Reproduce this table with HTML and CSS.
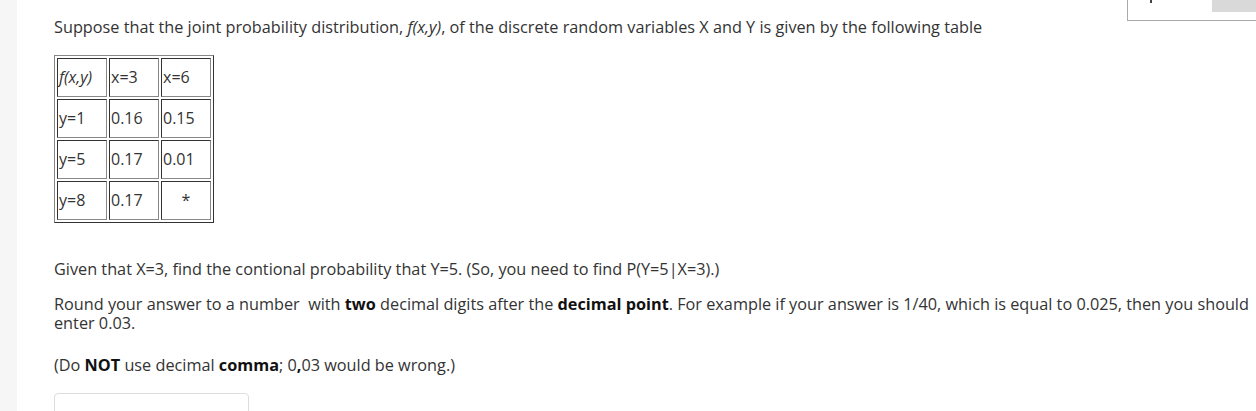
FILE: index.html
```html
<!DOCTYPE html>
<html>
<head>
<meta charset="utf-8">
<link rel="stylesheet" href="styles.css">
</head>
<body>
<div class="page">
  <aside class="side"></aside>
  <main class="main">
    <p class="intro">Suppose that the joint probability distribution, <em>f(x,y)</em>, of the discrete random variables X and Y is given by the following table</p>
    <table class="prob">
      <tr><td><em>f(x,y)</em></td><td>x=3</td><td>x=6</td></tr>
      <tr><td>y=1</td><td>0.16</td><td>0.15</td></tr>
      <tr><td>y=5</td><td>0.17</td><td>0.01</td></tr>
      <tr><td>y=8</td><td>0.17</td><td class="star">*</td></tr>
    </table>
    <p class="given">Given that X=3, find the contional probability that Y=5. (So, you need to find P(Y=5|X=3).)</p>
    <p class="round">Round your answer to a number&nbsp; with <strong>two</strong> decimal digits after the <strong>decimal point</strong>. For example if your answer is 1/40, which is equal to 0.025, then you should enter 0.03.</p>
    <p class="note">(Do <strong>NOT</strong> use decimal <strong>comma</strong>; 0<strong>,</strong>03 would be wrong.)</p>
    <div class="answer"></div>
  </main>
  <div class="topbox"><span class="mark"></span><span class="grey"></span></div>
</div>
</body>
</html>
```
FILE: styles.css
```css
html, body {
  margin: 0;
  padding: 0;
  background: #fff;
  overflow: hidden;
}
.page {
  display: flex;
  height: 411px;
  position: relative;
  font-family: "Open Sans", "Liberation Sans", sans-serif;
  font-size: 16.25px;
  line-height: 19px;
  color: #333;
}
.side {
  width: 17px;
  flex: none;
  background: #f6f6f6;
}
.main {
  flex: 1;
  padding: 18px 0 0 37px;
}
p {
  margin: 0;
}
.intro {
  margin-bottom: 18px;
}
.prob {
  border: 1px solid;
  border-color: #888 #333 #333 #888;
  border-spacing: 2px;
  font-size: 16px;
}
.prob td {
  box-sizing: border-box;
  width: 50px;
  height: 39px;
  padding: 1px;
  border: 1px solid;
  border-color: #333 #888 #888 #333;
  vertical-align: middle;
  line-height: 19px;
}
.prob .star {
  text-align: center;
}
.given {
  margin-top: 37px;
  margin-bottom: 16px;
}
.round {
  margin-bottom: 23px;
}
.note {
  margin-bottom: 18px;
}
strong {
  font-weight: 700;
  color: #111;
}
.answer {
  width: 195px;
  height: 30px;
  box-sizing: border-box;
  border: 1px solid #ddd;
  border-radius: 4px;
}
.topbox {
  position: absolute;
  top: 0;
  left: 1127px;
  right: 0;
  height: 21px;
  box-sizing: border-box;
  border-left: 1px solid #aaa;
  border-bottom: 1px solid #aaa;
  display: flex;
  justify-content: space-between;
  align-items: flex-start;
}
.mark {
  width: 2px;
  height: 3px;
  margin-left: 22px;
  background: #444;
}
.grey {
  width: 44px;
  height: 12px;
  background: #d9d9d9;
}
```
